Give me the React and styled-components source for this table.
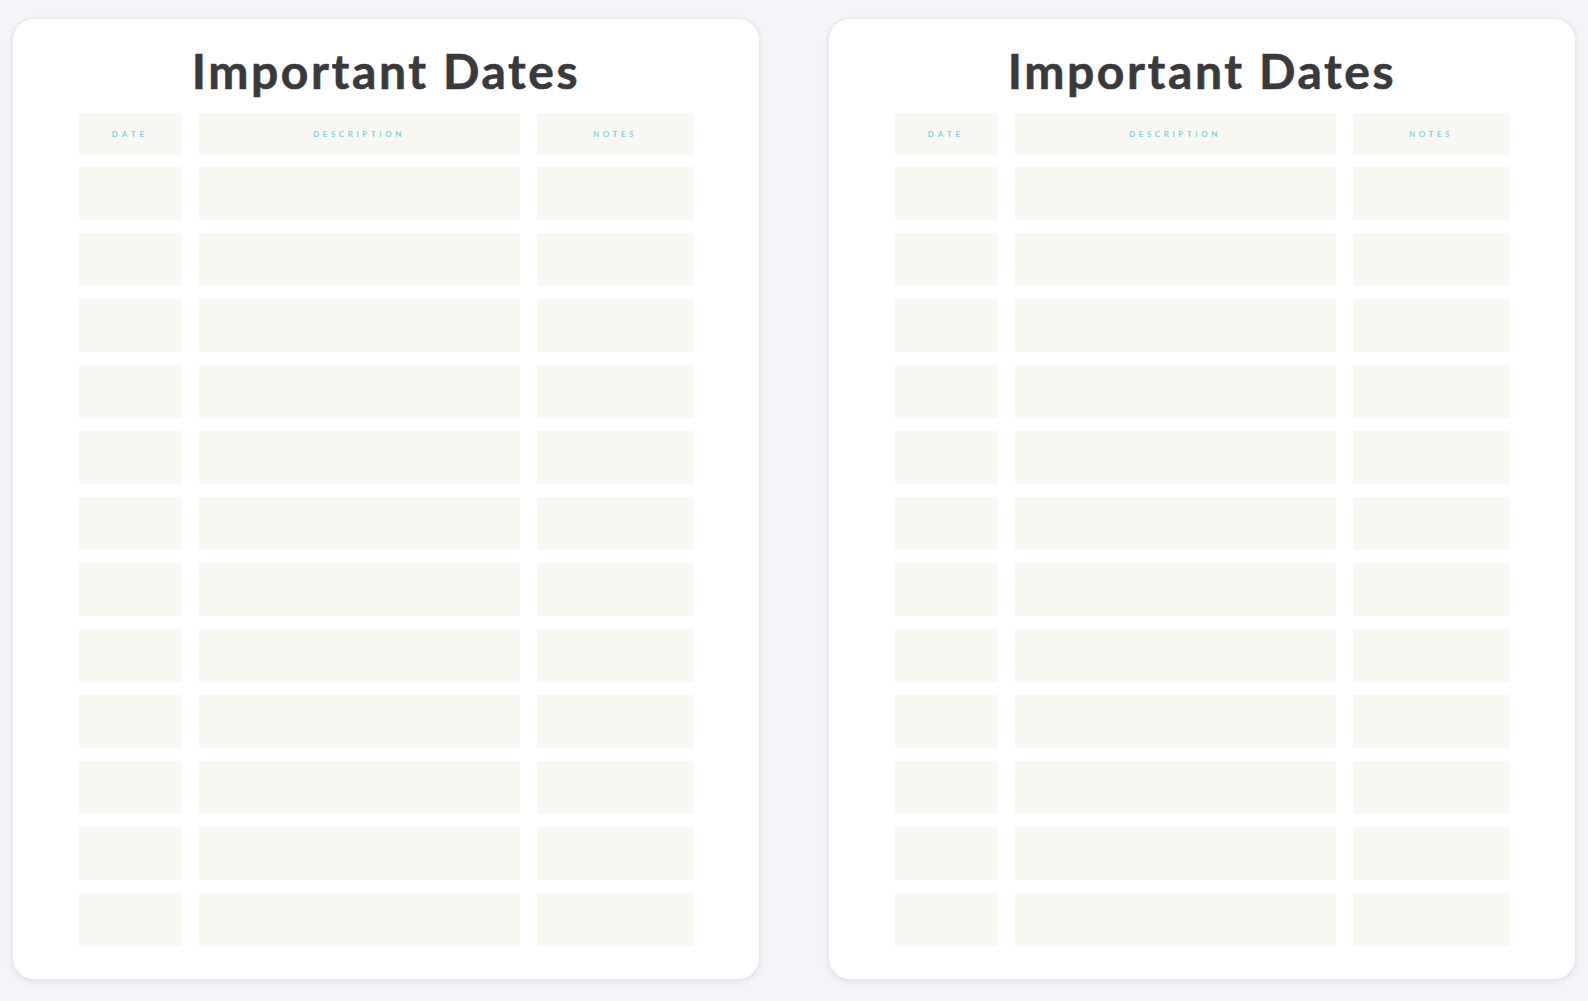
import React from "react";
import styled, { createGlobalStyle } from "styled-components";

const Global = createGlobalStyle`
  html, body { margin: 0; padding: 0; background: #f4f6f9; }
  body { font-family: "Lato", "Liberation Sans", sans-serif; }
`;

const Page = styled.div`
  display: grid;
  grid-template-columns: 748px 748px;
  column-gap: 68px;
  padding: 18px 12px 21px;
  height: 1001px;
  box-sizing: border-box;
`;

const Card = styled.section`
  background: #ffffff;
  border-radius: 22px;
  border: 1px solid #e6e9ee;
  box-shadow: 0 2px 6px rgba(30, 40, 60, 0.1);
  box-sizing: border-box;
  display: flex;
  flex-direction: column;
  align-items: center;
  padding-top: 22px;
`;

const Title = styled.h1`
  margin: 0;
  font-family: "Lato", "Liberation Sans", sans-serif;
  font-weight: 700;
  font-size: 48px;
  line-height: 60px;
  color: #3a3a3c;
  letter-spacing: 2.6px;
  -webkit-text-stroke: 0.6px #3a3a3c;
`;

const Table = styled.div`
  margin-top: 12px;
  display: grid;
  grid-template-columns: 103px 321px 157px;
  column-gap: 17px;
  row-gap: 13px;
`;

const HeadCell = styled.div`
  height: 42px;
  background: #f8f7f2;
  display: flex;
  align-items: center;
  justify-content: center;
  margin-bottom: -1px;
  font-size: 8px;
  font-weight: 700;
  letter-spacing: ${(p) => p.$ls}px;
  color: #7fd5e8;
  text-transform: uppercase;
`;

const Cell = styled.div`
  height: 53px;
  background: #f8f7f2;
`;

const headers = [
  { t: "Date", ls: 4 },
  { t: "Description", ls: 3.6 },
  { t: "Notes", ls: 3.6 },
];

function DatesCard() {
  return (
    <Card>
      <Title>Important Dates</Title>
      <Table>
        {headers.map((h) => (
          <HeadCell key={h.t} $ls={h.ls}>{h.t}</HeadCell>
        ))}
        {Array.from({ length: 12 }).flatMap((_, r) =>
          [0, 1, 2].map((c) => <Cell key={`${r}-${c}`} />)
        )}
      </Table>
    </Card>
  );
}

export default function App() {
  return (
    <>
      <Global />
      <Page>
        <DatesCard />
        <DatesCard />
      </Page>
    </>
  );
}
